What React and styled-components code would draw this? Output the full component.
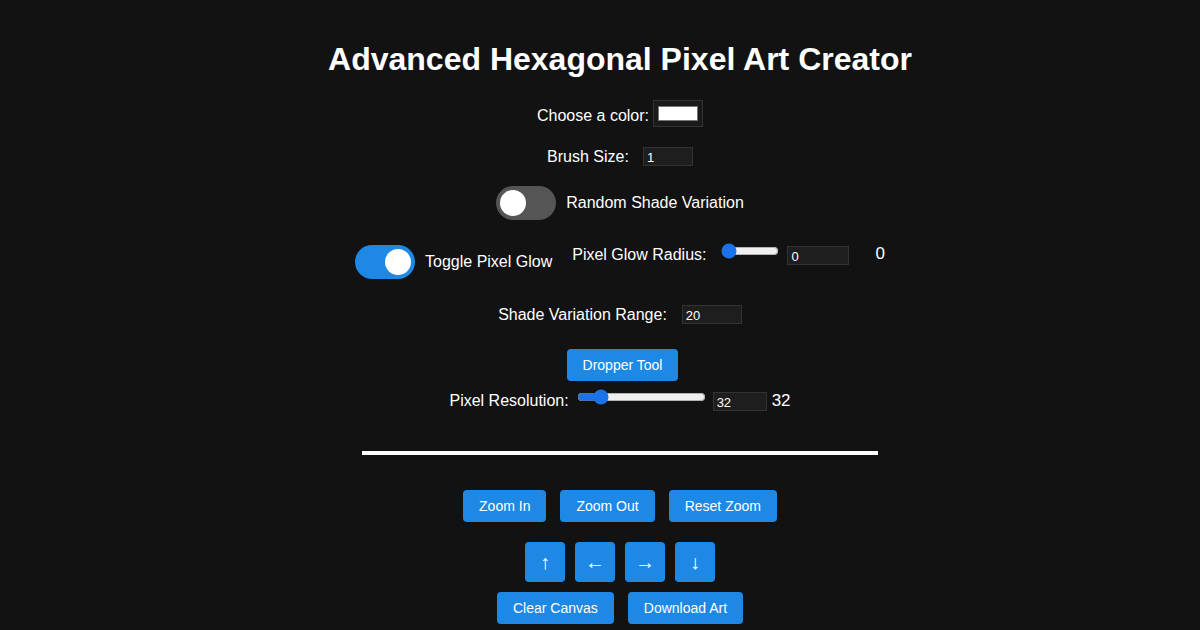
import styled, { createGlobalStyle } from "styled-components";

const GlobalStyle = createGlobalStyle`
    body {
        margin: 0;
        background-color: #121212;
        color: #ffffff;
        font-family: "Liberation Sans", Arial, sans-serif;
    }
`;

const Page = styled.div`
    display: flex;
    flex-direction: column;
    align-items: center;
    padding: 41px 0 0 40px;
    min-height: 630px;
    box-sizing: border-box;
`;

const Title = styled.h1`
    margin: 0;
    font-size: 32px;
    line-height: 37px;
    font-weight: 700;
`;

const Row = styled.div`
    display: flex;
    align-items: ${(p) => p.$align || "center"};
    gap: ${(p) => p.$gap || 0}px;
    margin-top: ${(p) => p.$mt || 0}px;
    padding-left: ${(p) => p.$pl || 0}px;
`;

const Label = styled.span`
    font-size: 16px;
    line-height: 18px;
    margin-right: ${(p) => p.$mr || 0}px;
    margin-top: ${(p) => p.$top || 0}px;
`;

const ColorBox = styled.div`
    width: 50px;
    height: 27px;
    box-sizing: border-box;
    padding: 5px 4px;
    background-color: #1a1a1a;
    border: 1px solid #333;
`;

const Swatch = styled.div`
    width: 100%;
    height: 100%;
    background-color: ${(p) => p.$color};
    border: 1px solid #777;
    box-sizing: border-box;
`;

const NumberInput = styled.input`
    width: ${(p) => p.$w}px;
    height: 19px;
    box-sizing: border-box;
    padding: 2px 3px 0;
    background-color: #1e1e1e;
    border: 1px solid #333;
    color: #ffffff;
    font-family: "Liberation Sans", Arial, sans-serif;
    font-size: 13px;
    outline: none;
    -moz-appearance: textfield;
    &::-webkit-inner-spin-button,
    &::-webkit-outer-spin-button {
        -webkit-appearance: none;
        margin: 0;
    }
`;

const Switch = styled.div`
    position: relative;
    width: 60px;
    height: 34px;
    border-radius: 17px;
    background-color: ${(p) => (p.$on ? "#1e88e5" : "#555555")};
    flex-shrink: 0;

    &::after {
        content: "";
        position: absolute;
        top: 4px;
        left: ${(p) => (p.$on ? "30px" : "4px")};
        width: 26px;
        height: 26px;
        border-radius: 50%;
        background-color: #ffffff;
    }
`;

const Slider = styled.input`
    width: ${(p) => p.$w}px;
    margin: ${(p) => p.$m || "0"};
    accent-color: #1a73e8;
`;

const Value = styled.span`
    font-size: ${(p) => p.$size || 16}px;
    line-height: 18px;
    margin-left: ${(p) => p.$ml || 0}px;
`;

const Button = styled.button`
    height: ${(p) => (p.$square ? 40 : 32)}px;
    min-width: ${(p) => (p.$square ? 40 : 0)}px;
    padding: 0 ${(p) => (p.$square ? 0 : 16)}px;
    background-color: #1e88e5;
    color: #ffffff;
    border: none;
    border-radius: 4px;
    font-family: "Liberation Sans", Arial, sans-serif;
    font-size: ${(p) => (p.$square ? 20 : 14)}px;
    cursor: pointer;
`;

const CanvasFrame = styled.div`
    width: 512px;
    height: 0;
    border: 2px solid #ffffff;
    margin-top: 40px;
`;

function App() {
    return (
        <Page>
            <GlobalStyle />
            <Title>Advanced Hexagonal Pixel Art Creator</Title>

            <Row $mt={22} $gap={4}>
                <Label $top={4}>Choose a color:</Label>
                <ColorBox>
                    <Swatch $color="#ffffff" />
                </ColorBox>
            </Row>

            <Row $mt={20} $gap={14}>
                <Label>Brush Size:</Label>
                <NumberInput type="number" $w={50} defaultValue={1} />
            </Row>

            <Row $mt={20} $gap={10}>
                <Switch />
                <Label>Random Shade Variation</Label>
            </Row>

            <Row $mt={25} $align="flex-start" $gap={20}>
                <Row $gap={10}>
                    <Switch $on />
                    <Label>Toggle Pixel Glow</Label>
                </Row>
                <Row $align="flex-start">
                    <Label $mr={15} $top={1}>Pixel Glow Radius:</Label>
                    <Slider type="range" $w={58} $m="-2px 8px 0 0" min={0} max={20} defaultValue={0} />
                    <NumberInput type="number" $w={62} defaultValue={0} style={{ marginTop: 1 }} />
                    <Value $ml={26} $size={17}>0</Value>
                </Row>
            </Row>

            <Row $mt={26} $gap={15}>
                <Label>Shade Variation Range:</Label>
                <NumberInput type="number" $w={60} defaultValue={20} />
            </Row>

            <Row $mt={25} $pl={5}>
                <Button>Dropper Tool</Button>
            </Row>

            <Row $mt={11} $align="flex-start">
                <Label $mr={8}>Pixel Resolution:</Label>
                <Slider type="range" $w={129} $m="-3px 7px 0 0" min={16} max={128} defaultValue={32} />
                <NumberInput type="number" $w={54} defaultValue={32} />
                <Value $ml={5} $size={17}>32</Value>
            </Row>

            <CanvasFrame />

            <Row $mt={35} $gap={14}>
                <Button>Zoom In</Button>
                <Button>Zoom Out</Button>
                <Button>Reset Zoom</Button>
            </Row>

            <Row $mt={20} $gap={10}>
                <Button $square>↑</Button>
                <Button $square>←</Button>
                <Button $square>→</Button>
                <Button $square>↓</Button>
            </Row>

            <Row $mt={10} $gap={14}>
                <Button>Clear Canvas</Button>
                <Button>Download Art</Button>
            </Row>
        </Page>
    );
}

export default App;
